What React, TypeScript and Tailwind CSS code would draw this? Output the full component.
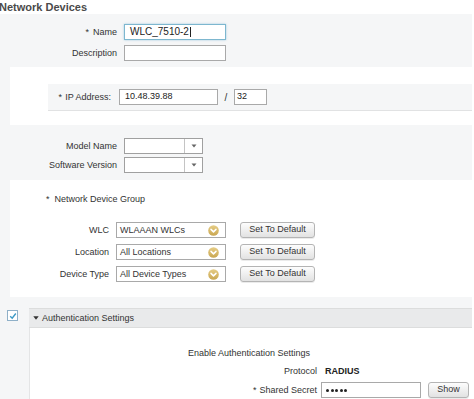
import React from "react";

const Btn = ({ w, children }: { w: string; children: React.ReactNode }) => (
  <div
    className={`${w} h-[16px] flex items-center justify-center rounded-[3px] border border-[#b4b4b4] bg-linear-to-b from-[#fdfdfd] to-[#e2e2e2] text-[9px] text-[#333] shadow-[0_1px_0_rgba(0,0,0,0.08)]`}
  >
    {children}
  </div>
);

const GoldChevron = () => (
  <svg width="11" height="11" viewBox="0 0 11 11">
    <defs>
      <linearGradient id="gc" x1="0" y1="0" x2="0" y2="1">
        <stop offset="0" stopColor="#e6cd86" />
        <stop offset="1" stopColor="#c9a650" />
      </linearGradient>
    </defs>
    <circle cx="5.5" cy="5.5" r="5.3" fill="url(#gc)" />
    <path d="M3 4.4 L5.5 6.9 L8 4.4" fill="none" stroke="#fff" strokeWidth="1.5" strokeLinecap="round" strokeLinejoin="round" />
  </svg>
);

const NdgRow = ({ label, value }: { label: string; value: string }) => (
  <div className="flex items-center h-[16px]">
    <div className="w-[99px] text-right leading-[12px]">{label}</div>
    <div className="ml-[7px] w-[110px] h-[16px] border border-[#a9a9a9] bg-white flex items-center pl-[3px] pr-[6px]">
      <span className="flex-1 leading-[12px]">{value}</span>
      <GoldChevron />
    </div>
    <div className="ml-[14px]">
      <Btn w="w-[75px]">Set To Default</Btn>
    </div>
  </div>
);

const SmallSelect = ({ label }: { label: string }) => (
  <div className="flex items-center h-[16px]">
    <div className="w-[117px] text-right leading-[12px]">{label}</div>
    <div className="ml-[7px] w-[79px] h-[16px] border border-[#a0a0a0] bg-white flex">
      <div className="flex-1" />
      <div className="w-[18px] border-l border-[#c4c4c4] flex items-center justify-center">
        <svg width="6" height="4" viewBox="0 0 6 4">
          <path d="M0.5 0.5 L5.5 0.5 L3 3.5 Z" fill="#666" />
        </svg>
      </div>
    </div>
  </div>
);

export default function App() {
  return (
    <div
      className="w-[474px] h-[399px] overflow-hidden bg-white text-[9px] text-[#333]"
      style={{ fontFamily: '"Liberation Sans", Arial, sans-serif' }}
    >
      <div className="w-[472px] h-[399px] bg-[#f5f6f7] flex flex-col">
        {/* Title */}
        <div className="h-[14px] bg-white flex items-center -ml-[1px] font-bold text-[11px] text-[#4a4a4a] leading-[14px]">
          Network Devices
        </div>

        {/* Name / Description */}
        <div className="pt-[10px] pb-[6px] flex flex-col gap-[5px]">
          <div className="flex items-center h-[16px]">
            <div className="w-[117px] text-right leading-[12px]">
              <span className="mr-[4px]">*</span>Name
            </div>
            <div className="ml-[7px] w-[102px] h-[16px] border border-[#7db7cf] bg-white flex items-center pl-[5px] text-[10px] text-[#222] shadow-[0_0_2px_rgba(80,160,200,0.5)]">
              <span className="leading-[12px]">WLC_7510-2</span>
              <span className="w-px h-[10px] bg-[#222] ml-px" />
            </div>
          </div>
          <div className="flex items-center h-[16px]">
            <div className="w-[117px] text-right leading-[12px]">Description</div>
            <div className="ml-[7px] w-[102px] h-[16px] border border-[#a9a9a9] bg-white" />
          </div>
        </div>

        {/* IP panel */}
        <div className="ml-[10px] w-[462px] bg-white pt-[17px] pb-[14px]">
          <div className="ml-[38px] h-[27px] bg-[#f5f6f7] border-b border-[#e1e2e3] flex items-center">
            <div className="w-[63px] text-right leading-[12px]">
              <span className="mr-[3px]">*</span>IP Address:
            </div>
            <div className="ml-[8px] w-[99px] h-[16px] border border-[#a9a9a9] bg-white flex items-center pl-[5px] text-[#222]">
              10.48.39.88
            </div>
            <div className="w-[16px] text-center text-[10px]">/</div>
            <div className="w-[33px] h-[16px] border border-[#a9a9a9] bg-white flex items-center pl-[2px] text-[#222]">
              32
            </div>
          </div>
        </div>

        {/* Model / Software */}
        <div className="pt-[13px] pb-[7px] flex flex-col gap-[3px]">
          <SmallSelect label="Model Name" />
          <SmallSelect label="Software Version" />
        </div>

        {/* Network Device Group */}
        <div className="ml-[10px] w-[462px] bg-white pt-[13px] pb-[15px]">
          <div className="ml-[36px] leading-[12px]">
            <span className="mr-[5px]">*</span>Network Device Group
          </div>
          <div className="mt-[17px] flex flex-col gap-[6px]">
            <NdgRow label="WLC" value="WLAAAN WLCs" />
            <NdgRow label="Location" value="All Locations" />
            <NdgRow label="Device Type" value="All Device Types" />
          </div>
        </div>

        {/* Authentication */}
        <div className="mt-[11px] flex flex-1">
          <div className="w-[29px] pl-[7px] pt-[2px]">
            <div className="w-[11px] h-[11px] border border-[#8fb0c8] bg-white flex items-center justify-center">
              <svg width="8" height="8" viewBox="0 0 8 8">
                <path d="M1.2 4.2 L3.2 6.2 L6.8 1.5" fill="none" stroke="#3d9ac6" strokeWidth="1.4" />
              </svg>
            </div>
          </div>
          <div className="flex-1 flex flex-col">
            <div className="h-[20px] bg-[#e9eaeb] border-t border-[#dcdddd] border-b border-[#c9caca] flex items-center pl-[4px] text-[#333]">
              <svg width="6" height="4" viewBox="0 0 6 4" className="mr-[3px]">
                <path d="M0.3 0.3 L5.7 0.3 L3 3.7 Z" fill="#333" />
              </svg>
              <span className="leading-[12px]">Authentication Settings</span>
            </div>
            <div className="flex-1 bg-white border-l border-[#e4e5e6] pt-[19px]">
              <div className="ml-[158px] leading-[12px]">Enable Authentication Settings</div>
              <div className="mt-[6px] flex items-center h-[12px]">
                <div className="w-[287px] text-right leading-[12px]">Protocol</div>
                <div className="ml-[8px] font-bold leading-[12px] text-[#222]">RADIUS</div>
              </div>
              <div className="mt-[5px] flex items-center h-[16px]">
                <div className="w-[287px] text-right leading-[12px]">
                  <span className="mr-[3px]">*</span>Shared Secret
                </div>
                <div className="ml-[4px] w-[100px] h-[16px] border border-[#a9a9a9] bg-white flex items-center gap-[1.5px] pl-[4px]">
                  <span className="w-[3px] h-[3px] rounded-full bg-[#222]" />
                  <span className="w-[3px] h-[3px] rounded-full bg-[#222]" />
                  <span className="w-[3px] h-[3px] rounded-full bg-[#222]" />
                  <span className="w-[3px] h-[3px] rounded-full bg-[#222]" />
                  <span className="w-[3px] h-[3px] rounded-full bg-[#222]" />
                </div>
                <div className="ml-[7px]">
                  <Btn w="w-[41px]">Show</Btn>
                </div>
              </div>
            </div>
          </div>
        </div>
      </div>
    </div>
  );
}
